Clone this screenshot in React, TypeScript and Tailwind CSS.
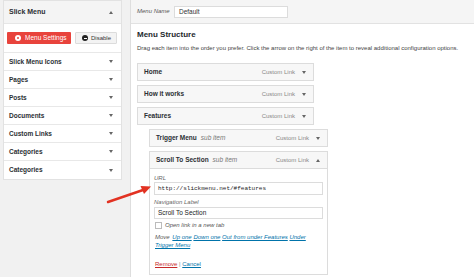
import React from "react";

const font = { fontFamily: '"Liberation Sans", Arial, sans-serif' };

function Caret({ up = false }: { up?: boolean }) {
  return (
    <svg width="4" height="3" viewBox="0 0 4 3" aria-hidden="true">
      {up ? <path d="M0 3 L2 0 L4 3 Z" fill="#666" /> : <path d="M0 0 L4 0 L2 3 Z" fill="#666" />}
    </svg>
  );
}

const sideRows = ["Slick Menu Icons", "Pages", "Posts", "Documents", "Custom Links", "Categories", "Categories"];

function Sidebar() {
  return (
    <div className="w-[130px] shrink-0 pl-[3px] pr-[8px]">
      <div className="border border-[#e2e2e2] bg-white">
        <div className="flex h-[23px] items-center justify-between border-b border-[#e6e6e6] bg-[#f4f4f4] pl-[5px] pr-[8px]">
          <span className="text-[7px] font-bold text-[#2b2f33]">Slick Menu</span>
          <Caret up />
        </div>
        <div className="flex h-[29px] items-center gap-[4px] border-b border-[#e8e8e8] pl-[3px]">
          <div className="flex h-[12px] w-[64px] items-center gap-[4px] rounded-[1px] bg-[#e8433c] pl-[8px]">
            <span className="flex h-[6px] w-[6px] items-center justify-center rounded-full bg-white">
              <span className="h-[2px] w-[2px] rounded-full bg-[#e8433c]" />
            </span>
            <span className="text-[6.5px] text-white">Menu Settings</span>
          </div>
          <div className="flex h-[12px] w-[42px] items-center gap-[3px] rounded-[1px] border border-[#dcdcdc] bg-[#f3f3f3] pl-[6px]">
            <span className="flex h-[6px] w-[6px] items-center justify-center rounded-full bg-[#222]">
              <span className="h-[1px] w-[3px] bg-white" />
            </span>
            <span className="text-[6px] text-[#333]">Disable</span>
          </div>
        </div>
        {sideRows.map((r, i) => (
          <div
            key={i}
            className={`flex h-[18px] items-center justify-between pl-[5px] pr-[8px] ${i < sideRows.length - 1 ? "border-b border-[#e8e8e8]" : ""}`}
          >
            <span className="text-[6.5px] font-bold text-[#2b2f33]">{r}</span>
            <Caret />
          </div>
        ))}
      </div>
    </div>
  );
}

function ItemBar({ title, sub, up = false }: { title: string; sub?: boolean; up?: boolean }) {
  return (
    <div className="flex h-[18px] items-center justify-between border border-[#dcdcdc] bg-[#f7f7f7] pl-[6px] pr-[7px]">
      <span className="text-[6.5px] font-bold text-[#2b2f33]">
        {title}
        {sub && <span className="ml-[4px] font-normal italic text-[#777]">sub item</span>}
      </span>
      <span className="flex items-center gap-[7px]">
        <span className="text-[6px] text-[#888]">Custom Link</span>
        <Caret up={up} />
      </span>
    </div>
  );
}

function Main() {
  return (
    <div className="flex-1 border-l border-[#dedede] bg-white">
      <div className="flex h-[24px] items-center border-b border-[#e2e2e2] bg-[#f5f5f5] pl-[6px]">
        <span className="w-[37px] text-[6px] italic text-[#555]">Menu Name</span>
        <div className="flex h-[12px] w-[114px] items-center border border-[#dcdcdc] bg-white pl-[4px] text-[6.5px] text-[#333]">
          Default
        </div>
      </div>
      <div className="pl-[6px] pt-[6px]">
        <div className="text-[8px] font-semibold leading-[10px] text-[#23282d]">Menu Structure</div>
        <div className="mt-[4px] whitespace-nowrap text-[6px] leading-[8px] text-[#444]">
          Drag each item into the order you prefer. Click the arrow on the right of the item to reveal additional configuration options.
        </div>
        <div className="mt-[11px] flex w-[177px] flex-col gap-[4px]">
          <ItemBar title="Home" />
          <ItemBar title="How it works" />
          <ItemBar title="Features" />
        </div>
        <div className="ml-[12px] mt-[4px] flex w-[179px] flex-col gap-[4px]">
          <ItemBar title="Trigger Menu" sub />
          <div>
            <ItemBar title="Scroll To Section" sub up />
            <div className="border border-t-0 border-[#dcdcdc] bg-white px-[4px] pb-[6px] pt-[5px] text-[6px]">
              <div className="italic leading-[8px] text-[#666]">URL</div>
              <div className="flex h-[13px] items-center border border-[#dcdcdc] pl-[3px] font-['Liberation_Mono',monospace] text-[6px] text-[#222]">
                http://slickmenu.net/#features
              </div>
              <div className="mt-[3px] italic leading-[8px] text-[#666]">Navigation Label</div>
              <div className="mt-[1px] flex h-[12px] items-center border border-[#dcdcdc] pl-[3px] text-[6.5px] text-[#222]">
                Scroll To Section
              </div>
              <div className="mt-[2px] flex h-[8px] items-center gap-[3px] pl-[1px]">
                <span className="h-[7px] w-[7px] border border-[#bbb] bg-white" />
                <span className="italic text-[#555]">Open link in a new tab</span>
              </div>
              <div className="mt-[4px] pl-[1px] italic leading-[8px] text-[#555]">
                Move <span className="ml-[1px] text-[#0073aa] underline">Up one</span>{" "}
                <span className="text-[#0073aa] underline">Down one</span>{" "}
                <span className="text-[#0073aa] underline">Out from under Features</span>{" "}
                <span className="text-[#0073aa] underline">Under</span>
                <br />
                <span className="text-[#0073aa] underline">Trigger Menu</span>
              </div>
              <div className="mt-[11px] pl-[1px] leading-[8px]">
                <span className="text-[#c62828] underline">Remove</span>
                <span className="text-[#888]"> | </span>
                <span className="text-[#0073aa] underline">Cancel</span>
              </div>
            </div>
          </div>
        </div>
      </div>
    </div>
  );
}

export default function App() {
  return (
    <div className="relative flex h-[277px] w-[474px] overflow-hidden bg-[#f1f1f1]" style={font}>
      <Sidebar />
      <Main />
      <svg className="absolute left-0 top-0" width="474" height="277" aria-hidden="true">
        <line x1="108" y1="202" x2="143" y2="190" stroke="#e23222" strokeWidth="2.4" strokeLinecap="round" />
        <path d="M151 186.5 L140.5 186 L144 194 Z" fill="#e23222" />
      </svg>
    </div>
  );
}
